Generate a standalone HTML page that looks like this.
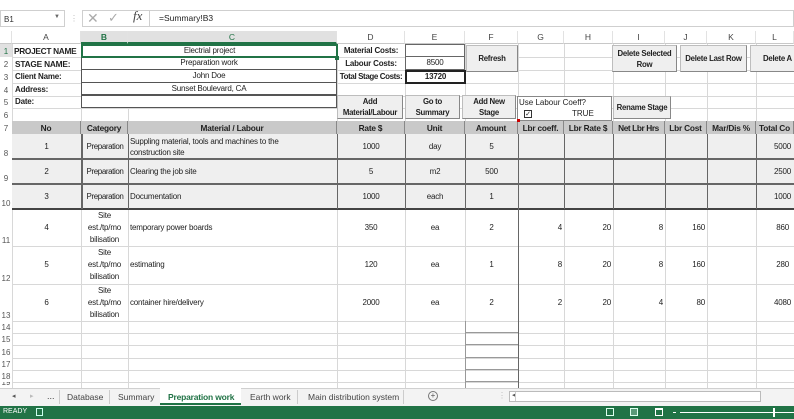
<!DOCTYPE html>
<html><head><meta charset="utf-8"><style>
*{margin:0;padding:0;box-sizing:border-box}
body{width:794px;height:419px;overflow:hidden;background:#fff;font-family:"Liberation Sans",sans-serif;position:relative;color:#222}
div{position:absolute}
.v{width:1px;background:#d8d8d8;top:44px;height:344px}
.h{height:1px;background:#d8d8d8;left:0;width:794px}
.c{display:flex;align-items:center;justify-content:center;text-align:center;font-size:8px;letter-spacing:-0.2px;line-height:12px;overflow:hidden;white-space:nowrap}
.l{justify-content:flex-start;padding-left:2px;text-align:left}
.r{justify-content:flex-end;padding-right:2px}
.b{font-weight:bold}
.ch{top:31px;height:13px;font-size:8.5px;color:#444;display:flex;align-items:center;justify-content:center;background:#fff;border-right:1px solid #e2e2e2;border-bottom:1px solid #c8c8c8}
.rh{left:0;width:12px;font-size:8px;color:#555;display:flex;align-items:flex-end;justify-content:center;padding-bottom:1px;background:#fff}
.btn{background:#efefef;border:1px solid #bdbdbd;border-right-color:#888;border-bottom-color:#888;font-weight:bold;font-size:7.8px;letter-spacing:-0.25px;white-space:nowrap;line-height:11px;display:flex;align-items:center;justify-content:center;text-align:center;overflow:hidden}
.hd{background:#c9c9c9;font-weight:bold;border-right:1px solid #888;top:121px;height:13px;font-size:8.3px}
.g{background:#efefef}
</style></head><body>
<div style="left:0;top:10px;width:65px;height:17px;border:1px solid #cfcfcf;font-size:8px;padding:4px 3px;color:#333">B1<span style="position:absolute;left:53px;top:3px;font-size:6px;color:#666">▼</span></div>
<div style="left:70px;top:14px;font-size:8px;color:#bbb">⋮</div>
<div style="left:82px;top:10px;width:712px;height:17px;border:1px solid #cfcfcf"></div>
<div style="left:87px;top:10px;font-size:14px;color:#aaa">✕</div>
<div style="left:108px;top:10px;font-size:13px;color:#aaa">✓</div>
<div style="left:133px;top:8px;font-size:13px;font-style:italic;font-family:'Liberation Serif',serif;color:#444">fx</div>
<div style="left:149px;top:10px;width:1px;height:17px;background:#cfcfcf"></div>
<div style="left:159px;top:13px;font-size:8.5px;color:#222">=Summary!B3</div>
<div style="left:0;top:31px;width:12px;height:13px;border-right:1px solid #e2e2e2;border-bottom:1px solid #c8c8c8"></div>
<div class="ch" style="left:12px;width:69px">A</div>
<div class="ch" style="left:81px;width:47px;background:#e1e1e1;color:#217346;font-weight:bold;border-bottom:2px solid #217346">B</div>
<div class="ch" style="left:128px;width:209px;background:#e1e1e1;color:#217346;border-bottom:2px solid #217346">C</div>
<div class="ch" style="left:337px;width:68px">D</div>
<div class="ch" style="left:405px;width:60px">E</div>
<div class="ch" style="left:465px;width:53px">F</div>
<div class="ch" style="left:518px;width:46px">G</div>
<div class="ch" style="left:564px;width:49px">H</div>
<div class="ch" style="left:613px;width:52px">I</div>
<div class="ch" style="left:665px;width:42px">J</div>
<div class="ch" style="left:707px;width:49px">K</div>
<div class="ch" style="left:756px;width:38px">L</div>
<div class="v" style="left:12px"></div><div class="v" style="left:81px"></div><div class="v" style="left:128px"></div><div class="v" style="left:337px"></div><div class="v" style="left:405px"></div><div class="v" style="left:465px"></div><div class="v" style="left:518px"></div><div class="v" style="left:564px"></div><div class="v" style="left:613px"></div><div class="v" style="left:665px"></div><div class="v" style="left:707px"></div><div class="v" style="left:756px"></div>
<div class="h" style="top:57px"></div><div class="h" style="top:70px"></div><div class="h" style="top:83px"></div><div class="h" style="top:96px"></div><div class="h" style="top:108px"></div><div class="h" style="top:121px"></div><div class="h" style="top:134px"></div><div class="h" style="top:159px"></div><div class="h" style="top:184px"></div><div class="h" style="top:209px"></div><div class="h" style="top:246px"></div><div class="h" style="top:284px"></div><div class="h" style="top:321px"></div><div class="h" style="top:333px"></div><div class="h" style="top:345px"></div><div class="h" style="top:358px"></div><div class="h" style="top:370px"></div><div class="h" style="top:382px"></div>
<div class="rh" style="top:44px;height:13px;background:#e1e1e1;color:#217346">1</div>
<div class="rh" style="top:57px;height:13px">2</div><div class="rh" style="top:70px;height:13px">3</div><div class="rh" style="top:83px;height:13px">4</div><div class="rh" style="top:96px;height:12px">5</div><div class="rh" style="top:108px;height:13px">6</div><div class="rh" style="top:121px;height:13px">7</div><div class="rh" style="top:134px;height:25px">8</div><div class="rh" style="top:159px;height:25px">9</div><div class="rh" style="top:184px;height:25px">10</div><div class="rh" style="top:209px;height:37px">11</div><div class="rh" style="top:246px;height:38px">12</div><div class="rh" style="top:284px;height:37px">13</div><div class="rh" style="top:321px;height:12px">14</div><div class="rh" style="top:333px;height:12px">15</div><div class="rh" style="top:345px;height:13px">16</div><div class="rh" style="top:358px;height:12px">17</div><div class="rh" style="top:370px;height:12px">18</div><div class="rh" style="top:382px;height:6px;overflow:hidden">19</div>
<div class="c l b" style="left:13px;top:44px;width:68px;height:13px;font-size:8.3px;letter-spacing:-0.3px;padding-left:1px">PROJECT NAME</div>
<div class="c l b" style="left:13px;top:57px;width:68px;height:13px;font-size:8.3px">STAGE NAME:</div>
<div class="c l b" style="left:13px;top:70px;width:68px;height:13px">Client Name:</div>
<div class="c l b" style="left:13px;top:83px;width:68px;height:13px">Address:</div>
<div class="c l b" style="left:13px;top:96px;width:68px;height:12px">Date:</div>
<div class="c" style="left:81px;top:57px;width:256px;height:13px;background:#fff;border:1px solid #555;border-top:0">Preparation work</div>
<div class="c" style="left:81px;top:70px;width:256px;height:13px;background:#fff;border:1px solid #555;border-top:0">John Doe</div>
<div class="c" style="left:81px;top:83px;width:256px;height:13px;background:#fff;border:1px solid #555;border-top:0;border-bottom:2px solid #555">Sunset Boulevard, CA</div>
<div class="c" style="left:81px;top:96px;width:256px;height:12px;background:#fff;border:1px solid #555;border-top:0"></div>
<div class="c" style="left:81px;top:44px;width:257px;height:14px;background:#fff;border:2px solid #217346">Electrial project</div>
<div style="left:335px;top:56px;width:4px;height:4px;background:#217346"></div>
<div class="c b" style="left:337px;top:44px;width:68px;height:13px">Material Costs:</div>
<div class="c b" style="left:337px;top:57px;width:68px;height:13px">Labour Costs:</div>
<div class="c b" style="left:337px;top:70px;width:68px;height:13px;letter-spacing:-0.4px">Total Stage Costs:</div>
<div class="c" style="left:405px;top:44px;width:60px;height:13px;border:1px solid #666;background:#fff"></div>
<div class="c" style="left:405px;top:57px;width:60px;height:13px;border:1px solid #666;border-top:0;background:#fff">8500</div>
<div class="c b" style="left:405px;top:70px;width:61px;height:14px;border:2px solid #222;background:#fff">13720</div>
<div class="btn" style="left:466px;top:45px;width:52px;height:27px">Refresh</div>
<div class="btn" style="left:612px;top:45px;width:65px;height:27px">Delete Selected<br>Row</div>
<div class="btn" style="left:680px;top:45px;width:67px;height:27px">Delete Last Row</div>
<div class="btn" style="left:750px;top:45px;width:50px;height:27px;justify-content:flex-start;padding-left:12px">Delete A</div>
<div class="btn" style="left:337px;top:95px;width:66px;height:24px">Add<br>Material/Labour</div>
<div class="btn" style="left:405px;top:95px;width:55px;height:24px">Go to<br>Summary</div>
<div class="btn" style="left:462px;top:95px;width:54px;height:24px">Add New<br>Stage</div>
<div style="left:517px;top:96px;width:95px;height:25px;background:#fff;border:1px solid #888;font-size:8px;line-height:11px;padding-left:1px">Use Labour Coeff?<br><span style="display:inline-block;width:8px;height:8px;border:1px solid #333;font-size:7px;line-height:7px;text-align:center;margin-left:5px">✓</span><span style="margin-left:40px">TRUE</span></div>
<div class="btn" style="left:613px;top:96px;width:58px;height:23px">Rename Stage</div>
<div class="c hd" style="left:12px;width:69px">No</div>
<div class="c hd" style="left:81px;width:47px">Category</div>
<div class="c hd" style="left:128px;width:209px">Material / Labour</div>
<div class="c hd" style="left:337px;width:68px">Rate $</div>
<div class="c hd" style="left:405px;width:60px">Unit</div>
<div class="c hd" style="left:465px;width:53px">Amount</div>
<div class="c hd" style="left:518px;width:46px">Lbr coeff.</div>
<div class="c hd" style="left:564px;width:49px">Lbr Rate $</div>
<div class="c hd" style="left:613px;width:52px;letter-spacing:-0.4px">Net Lbr Hrs</div>
<div class="c hd" style="left:665px;width:42px">Lbr Cost</div>
<div class="c hd" style="left:707px;width:49px">Mar/Dis %</div>
<div class="c hd" style="left:756px;width:38px;justify-content:flex-start;padding-left:3px">Total Co</div>
<div style="left:517px;top:119px;width:3px;height:3px;background:#c00"></div>
<div class="g" style="left:12px;top:134px;width:782px;height:75px"></div>
<div style="left:12px;top:158px;width:782px;height:2px;background:#666"></div>
<div style="left:12px;top:183px;width:782px;height:2px;background:#666"></div>
<div style="left:12px;top:208px;width:782px;height:2px;background:#444"></div>
<div style="left:81px;top:134px;width:2px;height:75px;background:#666"></div>
<div style="left:128px;top:134px;width:1px;height:75px;background:#666"></div>
<div style="left:337px;top:134px;width:1px;height:75px;background:#666"></div>
<div style="left:405px;top:134px;width:1px;height:75px;background:#666"></div>
<div style="left:465px;top:134px;width:1px;height:75px;background:#666"></div>
<div style="left:518px;top:134px;width:1px;height:254px;background:#666"></div>
<div style="left:564px;top:134px;width:1px;height:75px;background:#666"></div>
<div style="left:613px;top:134px;width:1px;height:75px;background:#666"></div>
<div style="left:665px;top:134px;width:1px;height:75px;background:#666"></div>
<div style="left:707px;top:134px;width:1px;height:75px;background:#666"></div>
<div style="left:756px;top:134px;width:1px;height:75px;background:#666"></div>
<div style="left:465px;top:321px;width:53px;height:67px;border-left:1px solid #999"></div>
<div style="left:465px;top:332px;width:53px;height:1px;background:#999"></div><div style="left:465px;top:344px;width:53px;height:1px;background:#999"></div><div style="left:465px;top:357px;width:53px;height:1px;background:#999"></div><div style="left:465px;top:369px;width:53px;height:1px;background:#999"></div><div style="left:465px;top:381px;width:53px;height:1px;background:#999"></div>
<div class="c" style="left:12px;top:134px;width:69px;height:25px">1</div>
<div class="c" style="left:82px;top:134px;width:46px;height:25px;letter-spacing:-0.4px">Preparation</div>
<div class="c l" style="left:128px;top:134px;width:209px;height:25px;line-height:11px">Suppling material, tools and machines to the<br>construction site</div>
<div class="c" style="left:337px;top:134px;width:68px;height:25px">1000</div>
<div class="c" style="left:405px;top:134px;width:60px;height:25px">day</div>
<div class="c" style="left:465px;top:134px;width:53px;height:25px">5</div>
<div class="c r" style="left:756px;top:134px;width:38px;height:25px;padding-right:3px">5000</div>
<div class="c" style="left:12px;top:159px;width:69px;height:25px">2</div>
<div class="c" style="left:82px;top:159px;width:46px;height:25px;letter-spacing:-0.4px">Preparation</div>
<div class="c l" style="left:128px;top:159px;width:209px;height:25px">Clearing the job site</div>
<div class="c" style="left:337px;top:159px;width:68px;height:25px">5</div>
<div class="c" style="left:405px;top:159px;width:60px;height:25px">m2</div>
<div class="c" style="left:465px;top:159px;width:53px;height:25px">500</div>
<div class="c r" style="left:756px;top:159px;width:38px;height:25px;padding-right:3px">2500</div>
<div class="c" style="left:12px;top:184px;width:69px;height:25px">3</div>
<div class="c" style="left:82px;top:184px;width:46px;height:25px;letter-spacing:-0.4px">Preparation</div>
<div class="c l" style="left:128px;top:184px;width:209px;height:25px">Documentation</div>
<div class="c" style="left:337px;top:184px;width:68px;height:25px">1000</div>
<div class="c" style="left:405px;top:184px;width:60px;height:25px">each</div>
<div class="c" style="left:465px;top:184px;width:53px;height:25px">1</div>
<div class="c r" style="left:756px;top:184px;width:38px;height:25px;padding-right:3px">1000</div>
<div class="c" style="left:12px;top:209px;width:69px;height:37px">4</div>
<div class="c" style="left:81px;top:209px;width:47px;height:37px;white-space:normal">Site est./tp/mo bilisation</div>
<div class="c l" style="left:128px;top:209px;width:209px;height:37px">temporary power boards</div>
<div class="c" style="left:337px;top:209px;width:68px;height:37px">350</div>
<div class="c" style="left:405px;top:209px;width:60px;height:37px">ea</div>
<div class="c" style="left:465px;top:209px;width:53px;height:37px">2</div>
<div class="c r" style="left:518px;top:209px;width:46px;height:37px">4</div>
<div class="c r" style="left:564px;top:209px;width:49px;height:37px">20</div>
<div class="c r" style="left:613px;top:209px;width:52px;height:37px">8</div>
<div class="c r" style="left:665px;top:209px;width:42px;height:37px">160</div>
<div class="c r" style="left:756px;top:209px;width:38px;height:37px;padding-right:5px">860</div>
<div class="c" style="left:12px;top:246px;width:69px;height:38px">5</div>
<div class="c" style="left:81px;top:246px;width:47px;height:38px;white-space:normal">Site est./tp/mo bilisation</div>
<div class="c l" style="left:128px;top:246px;width:209px;height:38px">estimating</div>
<div class="c" style="left:337px;top:246px;width:68px;height:38px">120</div>
<div class="c" style="left:405px;top:246px;width:60px;height:38px">ea</div>
<div class="c" style="left:465px;top:246px;width:53px;height:38px">1</div>
<div class="c r" style="left:518px;top:246px;width:46px;height:38px">8</div>
<div class="c r" style="left:564px;top:246px;width:49px;height:38px">20</div>
<div class="c r" style="left:613px;top:246px;width:52px;height:38px">8</div>
<div class="c r" style="left:665px;top:246px;width:42px;height:38px">160</div>
<div class="c r" style="left:756px;top:246px;width:38px;height:38px;padding-right:5px">280</div>
<div class="c" style="left:12px;top:284px;width:69px;height:37px">6</div>
<div class="c" style="left:81px;top:284px;width:47px;height:37px;white-space:normal">Site est./tp/mo bilisation</div>
<div class="c l" style="left:128px;top:284px;width:209px;height:37px">container hire/delivery</div>
<div class="c" style="left:337px;top:284px;width:68px;height:37px">2000</div>
<div class="c" style="left:405px;top:284px;width:60px;height:37px">ea</div>
<div class="c" style="left:465px;top:284px;width:53px;height:37px">2</div>
<div class="c r" style="left:518px;top:284px;width:46px;height:37px">2</div>
<div class="c r" style="left:564px;top:284px;width:49px;height:37px">20</div>
<div class="c r" style="left:613px;top:284px;width:52px;height:37px">4</div>
<div class="c r" style="left:665px;top:284px;width:42px;height:37px">80</div>
<div class="c r" style="left:756px;top:284px;width:38px;height:37px;padding-right:3px">4080</div>
<div style="left:0;top:388px;width:794px;height:18px;background:#f3f3f3;border-top:1px solid #d0d0d0"></div>
<div style="left:12px;top:392px;font-size:7px;color:#555">◂</div>
<div style="left:30px;top:392px;font-size:7px;color:#bbb">▸</div>
<div style="left:47px;top:391px;font-size:9px;color:#444">...</div>
<div style="left:59px;top:390px;width:1px;height:14px;background:#ccc"></div>
<div style="left:67px;top:392px;font-size:8.5px;color:#444">Database</div>
<div style="left:109px;top:390px;width:1px;height:14px;background:#ccc"></div>
<div style="left:118px;top:392px;font-size:8.5px;color:#444">Summary</div>
<div style="left:160px;top:388px;width:81px;height:17px;background:#fff;border-bottom:2px solid #217346"></div>
<div style="left:168px;top:392px;font-size:8.5px;font-weight:bold;color:#217346;letter-spacing:-0.2px">Preparation work</div>
<div style="left:250px;top:392px;font-size:8.5px;color:#444">Earth work</div>
<div style="left:297px;top:390px;width:1px;height:14px;background:#ccc"></div>
<div style="left:308px;top:392px;font-size:8.5px;color:#444">Main distribution system</div>
<div style="left:403px;top:390px;width:1px;height:14px;background:#ccc"></div>
<div style="left:428px;top:391px;width:10px;height:10px;border:1px solid #777;border-radius:50%;font-size:8px;line-height:8px;text-align:center;color:#555">+</div>
<div style="left:498px;top:391px;font-size:8px;color:#bbb">⋮</div>
<div style="left:509px;top:391px;width:252px;height:11px;border:1px solid #bbb;background:#fff"></div>
<div style="left:512px;top:391px;font-size:7px;color:#555">◂</div>
<div style="left:515px;top:392px;width:1px;height:9px;background:#ccc"></div>
<div style="left:0;top:406px;width:794px;height:13px;background:#217346"></div>
<div style="left:3px;top:408px;font-size:7px;color:#fff">READY</div>
<div style="left:36px;top:408px;width:7px;height:8px;border:1px solid #cfe;"></div>
<div style="left:606px;top:408px;width:8px;height:8px;border:1px solid #dfe"></div>
<div style="left:630px;top:408px;width:8px;height:8px;background:#5a9a78;border:1px solid #dfe"></div>
<div style="left:655px;top:408px;width:8px;height:8px;border:1px solid #fff;border-top-width:2px"></div>
<div style="left:673px;top:412px;width:3px;height:1px;background:#fff"></div>
<div style="left:680px;top:412px;width:114px;height:1px;background:#fff"></div>
<div style="left:773px;top:408px;width:2px;height:9px;background:#fff"></div>
</body></html>
